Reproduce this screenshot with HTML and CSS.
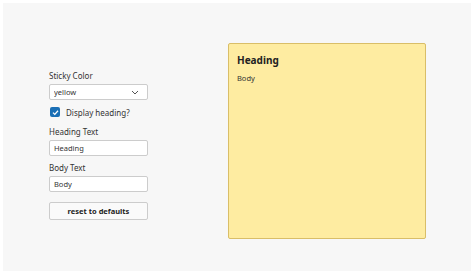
FILE: index.html
```html
<!DOCTYPE html>
<html lang="en">
<head>
  <meta charset="UTF-8" />
  <title>Sticky</title>
  <link rel="stylesheet" href="styles.css">
</head>
<body>
  <div class="panel">
    <form class="controls">
      <label class="field-label" for="color">Sticky Color</label>
      <div class="select-wrap">
        <select id="color" class="select">
          <option>yellow</option>
          <option>pink</option>
          <option>blue</option>
        </select>
        <svg class="chevron" width="8" height="5" viewBox="0 0 8 5"><path d="M1 1l3 3 3-3" fill="none" stroke="#555" stroke-width="1"/></svg>
      </div>
      <label class="check-row">
        <span class="checkbox">
          <svg width="9" height="9" viewBox="0 0 9 9"><path d="M2 4.6l1.8 1.8L7 2.8" fill="none" stroke="#fff" stroke-width="1.3"/></svg>
        </span>
        Display heading?
      </label>
      <label class="field-label" for="heading">Heading Text</label>
      <input id="heading" class="text-input" type="text" value="Heading">
      <label class="field-label" for="body">Body Text</label>
      <input id="body" class="text-input" type="text" value="Body">
      <button type="button" class="reset-button">reset to defaults</button>
    </form>

    <div class="sticky">
      <h2 class="sticky-heading">Heading</h2>
      <p class="sticky-body">Body</p>
    </div>
  </div>
</body>
</html>
```

FILE: styles.css
```css
html, body {
  margin: 0;
  padding: 0;
  background: #fff;
}

body {
  padding: 3px;
  font-family: 'Noto Sans', 'Open Sans', sans-serif;
  color: #222;
}

.panel {
  width: 468px;
  height: 268px;
  background: #f7f7f7;
  display: flex;
  align-items: flex-start;
  box-sizing: border-box;
  padding: 40px 0 0 46px;
}

.controls {
  width: 99px;
  display: flex;
  flex-direction: column;
  margin-top: 27px;
}

.field-label {
  font-size: 8px;
  line-height: 12px;
  color: #333;
  margin-bottom: 2px;
}

.select-wrap {
  position: relative;
  height: 16px;
}

.select {
  display: block;
  appearance: none;
  width: 100%;
  height: 16px;
  box-sizing: border-box;
  border: 1px solid #ccc;
  border-radius: 2px;
  background: #fff;
  font-family: inherit;
  font-size: 7.5px;
  color: #333;
  padding: 0 0 0 4px;
  margin: 0;
}

.chevron {
  position: absolute;
  right: 9px;
  top: 6px;
}

.check-row {
  display: flex;
  align-items: center;
  gap: 6px;
  font-size: 8px;
  color: #333;
  margin: 7px 0 9px 1px;
  height: 10px;
}

.checkbox {
  width: 10px;
  height: 10px;
  background: #1a6fb5;
  border-radius: 2px;
  display: flex;
  align-items: center;
  justify-content: center;
}

.text-input {
  display: block;
  width: 100%;
  height: 16px;
  box-sizing: border-box;
  border: 1px solid #ccc;
  border-radius: 2px;
  background: #fff;
  font-family: inherit;
  font-size: 7.5px;
  color: #333;
  padding: 0 4px;
  margin: 0 0 6px 0;
}

.reset-button {
  height: 18px;
  margin-top: 4px;
  border: 1px solid #ccc;
  border-radius: 2px;
  background: #fafafa;
  font-family: inherit;
  font-size: 7.5px;
  font-weight: bold;
  color: #222;
  padding: 0;
}

.sticky {
  width: 198px;
  height: 196px;
  box-sizing: border-box;
  margin-left: 80px;
  background: #feeca1;
  border: 1px solid #d9be68;
  border-radius: 2px;
  padding: 9px 8px;
}

.sticky-heading {
  margin: 0;
  font-size: 10px;
  line-height: 14px;
  font-weight: bold;
  color: #222;
}

.sticky-body {
  margin: 6px 0 0 0;
  font-size: 7.5px;
  line-height: 10px;
  color: #333;
}
```
